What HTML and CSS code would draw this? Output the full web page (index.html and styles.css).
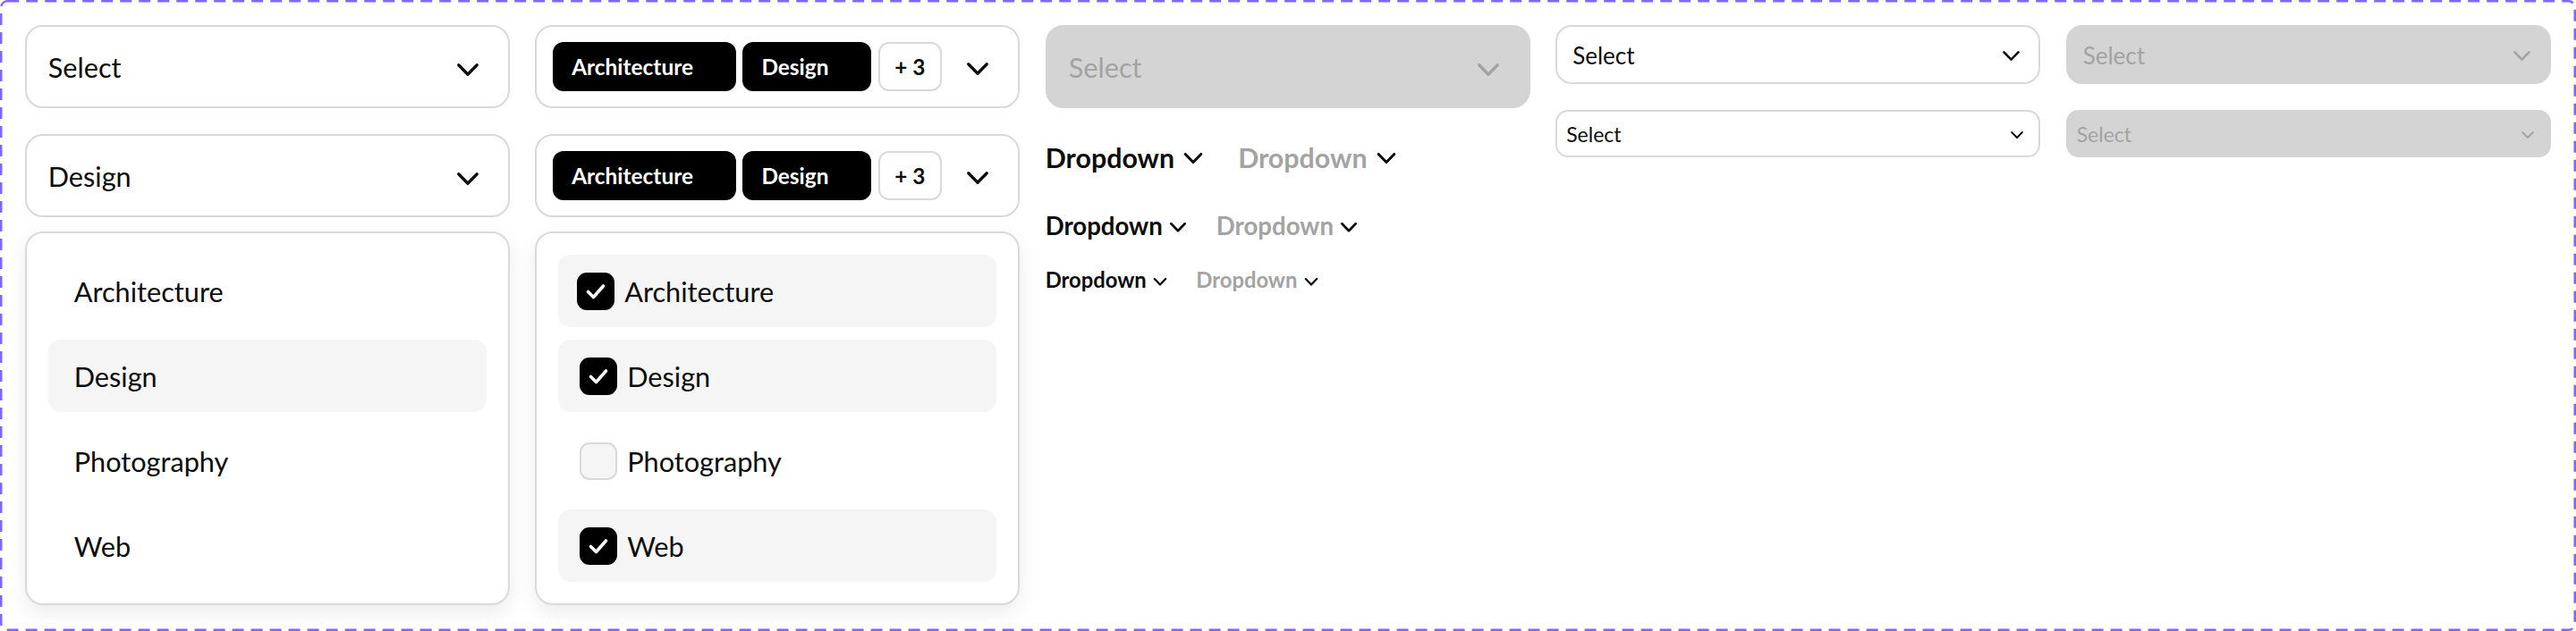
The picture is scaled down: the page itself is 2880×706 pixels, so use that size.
FILE: index.html
```html
<!DOCTYPE html>
<html lang="en">
<head>
<meta charset="utf-8">
<title>Dropdowns</title>
<link rel="stylesheet" href="styles.css">
</head>
<body>
<div class="frame">
  <svg class="frame-border" width="2880" height="706" viewBox="0 0 2880 706" aria-hidden="true">
    <rect x="1.25" y="1.25" width="2877.5" height="703.5" rx="7" ry="7" fill="none" stroke="#8065ff" stroke-width="2.5" stroke-dasharray="13 8"/>
  </svg>

  <!-- Column 1: single select -->
  <div class="col">
    <div class="select">
      <span class="label">Select</span>
      <svg class="chev chev--lg" viewBox="0 0 24 14"><path d="M1.75 1.75 L12 12.25 L22.25 1.75"/></svg>
    </div>
    <div class="select">
      <span class="label">Design</span>
      <svg class="chev chev--lg" viewBox="0 0 24 14"><path d="M1.75 1.75 L12 12.25 L22.25 1.75"/></svg>
    </div>
    <div class="menu">
      <div class="item">Architecture</div>
      <div class="item is-hover">Design</div>
      <div class="item">Photography</div>
      <div class="item">Web</div>
    </div>
  </div>

  <!-- Column 2: multi select -->
  <div class="col">
    <div class="select select--chips">
      <div class="chips">
        <span class="chip">Architecture</span>
        <span class="chip">Design</span>
        <span class="chip chip--more">+ 3</span>
      </div>
      <svg class="chev chev--lg" viewBox="0 0 24 14"><path d="M1.75 1.75 L12 12.25 L22.25 1.75"/></svg>
    </div>
    <div class="select select--chips">
      <div class="chips">
        <span class="chip">Architecture</span>
        <span class="chip">Design</span>
        <span class="chip chip--more">+ 3</span>
      </div>
      <svg class="chev chev--lg" viewBox="0 0 24 14"><path d="M1.75 1.75 L12 12.25 L22.25 1.75"/></svg>
    </div>
    <div class="menu">
      <div class="item item--check item--shift is-hover">
        <span class="check is-checked"><svg viewBox="0 0 42 42"><path d="M12.5 21.5 L18.5 27.5 L29.5 15"/></svg></span>
        <span>Architecture</span>
      </div>
      <div class="item item--check is-hover">
        <span class="check is-checked"><svg viewBox="0 0 42 42"><path d="M12.5 21.5 L18.5 27.5 L29.5 15"/></svg></span>
        <span>Design</span>
      </div>
      <div class="item item--check">
        <span class="check"></span>
        <span>Photography</span>
      </div>
      <div class="item item--check is-hover">
        <span class="check is-checked"><svg viewBox="0 0 42 42"><path d="M12.5 21.5 L18.5 27.5 L29.5 15"/></svg></span>
        <span>Web</span>
      </div>
    </div>
  </div>

  <!-- Column 3: disabled + text dropdowns -->
  <div class="col">
    <div class="select is-disabled">
      <span class="label">Select</span>
      <svg class="chev chev--lg" viewBox="0 0 24 14"><path d="M1.75 1.75 L12 12.25 L22.25 1.75"/></svg>
    </div>
    <div class="dd-row dd-row--lg">
      <span class="dd">Dropdown<svg class="chev" viewBox="0 0 24 14"><path d="M1.75 1.75 L12 12.25 L22.25 1.75"/></svg></span>
      <span class="dd dd--muted">Dropdown<svg class="chev" viewBox="0 0 24 14"><path d="M1.75 1.75 L12 12.25 L22.25 1.75"/></svg></span>
    </div>
    <div class="dd-row dd-row--md">
      <span class="dd">Dropdown<svg class="chev" viewBox="0 0 24 14"><path d="M1.75 1.75 L12 12.25 L22.25 1.75"/></svg></span>
      <span class="dd dd--muted">Dropdown<svg class="chev" viewBox="0 0 24 14"><path d="M1.75 1.75 L12 12.25 L22.25 1.75"/></svg></span>
    </div>
    <div class="dd-row dd-row--sm">
      <span class="dd">Dropdown<svg class="chev" viewBox="0 0 24 14"><path d="M1.75 1.75 L12 12.25 L22.25 1.75"/></svg></span>
      <span class="dd dd--muted">Dropdown<svg class="chev" viewBox="0 0 24 14"><path d="M1.75 1.75 L12 12.25 L22.25 1.75"/></svg></span>
    </div>
  </div>

  <!-- Column 4: medium / small -->
  <div class="col">
    <div class="select select--md">
      <span class="label">Select</span>
      <svg class="chev chev--md" viewBox="0 0 24 14"><path d="M1.75 1.75 L12 12.25 L22.25 1.75"/></svg>
    </div>
    <div class="select select--sm">
      <span class="label">Select</span>
      <svg class="chev chev--sm" viewBox="0 0 24 14"><path d="M1.75 1.75 L12 12.25 L22.25 1.75"/></svg>
    </div>
  </div>

  <!-- Column 5: medium / small disabled -->
  <div class="col">
    <div class="select select--md is-disabled">
      <span class="label">Select</span>
      <svg class="chev chev--md" viewBox="0 0 24 14"><path d="M1.75 1.75 L12 12.25 L22.25 1.75"/></svg>
    </div>
    <div class="select select--sm is-disabled">
      <span class="label">Select</span>
      <svg class="chev chev--sm" viewBox="0 0 24 14"><path d="M1.75 1.75 L12 12.25 L22.25 1.75"/></svg>
    </div>
  </div>
</div>
</body>
</html>
```

FILE: styles.css
```css
* { box-sizing: border-box; }

html, body {
  margin: 0;
  padding: 0;
  background: #ffffff;
}

body {
  font-family: "Lato", "Noto Sans", "Liberation Sans", sans-serif;
  color: #0d0d0d;
}

.frame {
  position: relative;
  width: 2880px;
  height: 706px;
  padding: 28px 28px 0 27.7px;
  display: grid;
  grid-template-columns: repeat(5, 542px);
  column-gap: 28.5px;
  align-items: start;
}

.frame-border {
  position: absolute;
  left: 0;
  top: 0;
  pointer-events: none;
}

.col {
  display: flex;
  flex-direction: column;
}

/* ---------- chevrons ---------- */
.chev {
  flex: none;
  fill: none;
  stroke: currentColor;
  stroke-width: 3.3;
  stroke-linecap: round;
  stroke-linejoin: round;
  overflow: visible;
}

.chev--lg { width: 24px; height: 14px; margin-top: 2px; }
.chev--md { width: 19px; height: 11px; margin-top: 0; }
.chev--sm { width: 16px; height: 8px; margin-top: 0; }

/* ---------- select box ---------- */
.select {
  height: 93px;
  border: 2px solid #d9d9d9;
  border-radius: 20px;
  background: #ffffff;
  display: flex;
  align-items: center;
  justify-content: space-between;
  padding: 4px 33px 0 24px;
  font-size: 30.7px;
  line-height: 1.2;
}

.select + .select { margin-top: 29px; }

.select.is-disabled {
  background: #d4d4d4;
  border-color: #d4d4d4;
  color: #a3a3a3;
}

.select--md {
  height: 66px;
  border-radius: 18px;
  padding: 3px 21px 0 17px;
  font-size: 26px;
}

.select--sm {
  height: 53px;
  border-radius: 14px;
  padding: 3px 16px 0 10px;
  font-size: 23px;
}

/* ---------- chips ---------- */
.select--chips {
  padding-top: 0;
  padding-left: 18px;
}

.select--chips .chev--lg { margin-top: 4px; }

.chips {
  display: flex;
  align-items: center;
  gap: 7.5px;
}

.chip {
  height: 55px;
  border-radius: 12px;
  background: #000000;
  color: #ffffff;
  font-weight: 700;
  font-size: 24.4px;
  line-height: 1.2;
  display: flex;
  align-items: center;
  padding: 0 48px 0 21px;
}

.chip--more {
  width: 71px;
  padding: 0;
  justify-content: center;
  background: #ffffff;
  color: #0d0d0d;
  border: 2px solid #d9d9d9;
}

/* ---------- menu ---------- */
.menu {
  margin-top: 16px;
  height: 418px;
  border: 2px solid #dadada;
  border-radius: 20px;
  background: #ffffff;
  box-shadow: 0 8px 22px rgba(0, 0, 0, 0.08);
  padding: 24px;
  display: flex;
  flex-direction: column;
  gap: 14px;
}

.item {
  height: 81px;
  border-radius: 14px;
  display: flex;
  align-items: center;
  padding-left: 29px;
  padding-top: 3px;
  font-size: 30.7px;
  line-height: 1.2;
}

.item.is-hover { background: #f5f5f5; }

.item--check {
  padding-left: 24px;
  padding-top: 0;
  gap: 11px;
}

.item--check > span:last-child { margin-top: 3px; }

.item--shift { padding-left: 21px; }

.check {
  flex: none;
  width: 42px;
  height: 42px;
  border-radius: 11px;
  background: #f5f5f5;
  border: 2px solid #d9d9d9;
  display: flex;
}

.check.is-checked {
  background: #000000;
  border-color: #000000;
}

.check svg {
  margin: -2px;
  width: 42px;
  height: 42px;
  fill: none;
  stroke: #ffffff;
  stroke-width: 3.6;
  stroke-linecap: round;
  stroke-linejoin: round;
}

/* ---------- text dropdowns ---------- */
.dd-row {
  display: flex;
  align-items: center;
  font-weight: 700;
  line-height: 1.2;
}

.dd {
  display: flex;
  align-items: center;
  color: #0d0d0d;
}

.dd--muted { color: #a3a3a3; }
.dd--muted .chev { color: #0d0d0d; }

.dd-row--lg { margin-top: 37px; font-size: 30.4px; gap: 39px; }
.dd-row--lg .chev { width: 22px; height: 12px; margin-left: 10px; margin-top: 2px; stroke-width: 3.6; }

.dd-row--md { margin-top: 41.5px; font-size: 27.6px; gap: 33px; }
.dd-row--md .chev { width: 20px; height: 10.5px; margin-left: 7px; margin-top: 4px; stroke-width: 3.6; }

.dd-row--sm { margin-top: 30px; font-size: 23.8px; gap: 32px; }
.dd-row--sm .chev { width: 16px; height: 8.5px; margin-left: 7.5px; margin-top: 3px; stroke-width: 3.8; }
```
